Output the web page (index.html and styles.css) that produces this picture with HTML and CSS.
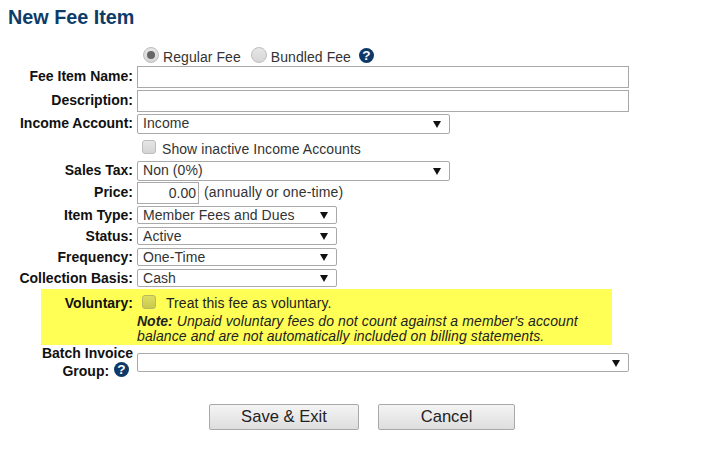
FILE: index.html
```html
<!DOCTYPE html>
<html lang="en">
<head>
<meta charset="utf-8">
<title>New Fee Item</title>
<link rel="stylesheet" href="styles.css">
</head>
<body>
<h1 class="title">New Fee Item</h1>
<form class="form">
  <div class="row row-radio">
    <span></span>
    <div class="inline">
      <input type="radio" name="kind" class="radio" checked><span class="radio-label">Regular Fee</span>
      <input type="radio" name="kind" class="radio radio-second"><span class="radio-label">Bundled Fee</span>
      <svg class="help help-top" viewBox="0 0 16 16"><circle cx="8" cy="8" r="8" fill="#0d3868"/><text x="8" y="13.2" class="help-q">?</text></svg>
    </div>
  </div>
  <div class="row row-input"><label class="label">Fee Item Name:</label><input class="field field-full"></div>
  <div class="row row-input"><label class="label">Description:</label><input class="field field-full"></div>
  <div class="row row-select"><label class="label">Income Account:</label><div class="sel sel-wide"><select><option>Income</option></select></div></div>
  <div class="row row-check">
    <span></span>
    <div class="inline"><input type="checkbox" class="check"><span class="check-label">Show inactive Income Accounts</span></div>
  </div>
  <div class="row row-select"><label class="label">Sales Tax:</label><div class="sel sel-wide"><select><option>Non (0%)</option></select></div></div>
  <div class="row row-price"><label class="label">Price:</label><div class="inline"><input class="field field-price" value="0.00"><span class="price-note">(annually or one-time)</span></div></div>
  <div class="row row-small"><label class="label">Item Type:</label><div class="sel sel-mid"><select><option>Member Fees and Dues</option></select></div></div>
  <div class="row row-small"><label class="label">Status:</label><div class="sel sel-mid"><select><option>Active</option></select></div></div>
  <div class="row row-small"><label class="label">Frequency:</label><div class="sel sel-mid"><select><option>One-Time</option></select></div></div>
  <div class="row row-small"><label class="label">Collection Basis:</label><div class="sel sel-mid"><select><option>Cash</option></select></div></div>
  <div class="voluntary">
    <label class="label label-vol">Voluntary:</label>
    <div>
      <div class="inline"><input type="checkbox" class="check check-vol"><span class="vol-text">Treat this fee as voluntary.</span></div>
      <p class="note"><b>Note:</b> Unpaid voluntary fees do not count against a member's account balance and are not automatically included on billing statements.</p>
    </div>
  </div>
  <div class="row row-batch">
    <label class="label label-batch">Batch Invoice<br>Group: <svg class="help help-batch" viewBox="0 0 16 16"><circle cx="8" cy="8" r="8" fill="#0d3868"/><text x="8" y="13.2" class="help-q">?</text></svg></label>
    <div class="sel sel-full"><select><option></option></select></div>
  </div>
  <div class="actions">
    <button type="button" class="btn btn-save">Save &amp; Exit</button>
    <button type="button" class="btn btn-cancel">Cancel</button>
  </div>
</form>
</body>
</html>
```
FILE: styles.css
```css
* { box-sizing: border-box; }
html, body { margin: 0; background: #fff; }
body { width: 706px; height: 470px; overflow: hidden; font-family: "Liberation Sans", Arial, sans-serif; font-size: 14px; letter-spacing: 0.07px; color: #222; }
.title { margin: 0; padding: 7px 0 0 8px; height: 45px; font-size: 19.8px; line-height: 21px; letter-spacing: 0; font-weight: bold; color: #0d3c68; }
.row { display: grid; grid-template-columns: 133px 1fr; column-gap: 4px; align-items: center; }
.label { font-weight: bold; text-align: right; color: #111; font-size: 14px; line-height: 16px; letter-spacing: 0; white-space: nowrap; }
.inline { display: flex; align-items: center; }
.row-radio { height: 19px; margin-bottom: 2px; }
.row-input { height: 22px; margin-bottom: 2px; }
.row-select { height: 19px; }
.row-check { height: 28px; }
.row-price { height: 22px; margin: 2px 0; }
.row-small { height: 18px; margin-bottom: 3px; }
.row-input .label, .row-select .label, .row-price .label { padding-bottom: 2px; }
.field { height: 22px; border: 1px solid #a9a9a9; border-radius: 0; padding: 1px 2px; font: 14px "Liberation Sans", Arial, sans-serif; color: #333; background: #fff; outline: 0; }
.field-full { width: 492px; }
.field-price { width: 62px; text-align: right; }
.price-note { margin-left: 5px; color: #333; position: relative; top: -1px; letter-spacing: 0.14px; }
.sel { position: relative; height: 100%; }
.sel::after { content: ""; position: absolute; top: 50%; margin-top: -3.5px; right: 9px; border-left: 4px solid transparent; border-right: 4px solid transparent; border-top: 7px solid #111; pointer-events: none; }
.sel-full::after { margin-top: -3px; }
.sel select { appearance: none; -webkit-appearance: none; width: 100%; height: 100%; display: block; border: 1px solid #a9a9a9; border-radius: 2px; background: #fff; padding: 0 0 0 5px; font: 14px "Liberation Sans", Arial, sans-serif; letter-spacing: 0.07px; color: #333; outline: 0; }
.row-select select { padding-bottom: 2px; }
.sel-wide { width: 313px; }
.sel-mid { width: 200px; }
.sel-full { width: 492px; height: 19px; margin-top: 8px; }
.radio, .check { appearance: none; -webkit-appearance: none; margin: 0; flex: none; }
.radio { width: 16px; height: 16px; border-radius: 50%; border: 1px solid #bdbdbd; background: linear-gradient(#e6e6e6, #d6d6d6); position: relative; margin-left: 6px; }
.radio:checked::after { content: ""; position: absolute; left: 3px; top: 3px; width: 8px; height: 8px; border-radius: 50%; background: #666; }
.radio-second { margin-left: 10px; }
.radio-label { margin-left: 4px; position: relative; top: 2px; color: #333; }
.help { width: 15px; height: 15px; flex: none; }
.help-q { font: bold 14.5px "Liberation Sans", Arial, sans-serif; fill: #fff; text-anchor: middle; }
.help-top { margin-left: 8px; position: relative; top: 1px; }
.check { width: 14px; height: 14px; border-radius: 3px; border: 1px solid #bdbdbd; background: linear-gradient(#e6e6e6, #d4d4d4); margin-left: 5px; }
.check-label { margin-left: 6px; position: relative; top: 2px; color: #333; }
.voluntary { display: grid; grid-template-columns: 92px 1fr; column-gap: 4px; margin: -1px 0 0 41px; width: 571px; height: 56px; background: #ffff55; padding-top: 5px; }
.label-vol { line-height: 18px; }
.check-vol { background: linear-gradient(#dede60, #c8c84e); border-color: #b8b860; margin-left: 5px; }
.vol-text { margin-left: 10px; position: relative; top: 1px; color: #222; }
.note { margin: 0; font-style: italic; font-size: 14px; line-height: 15px; letter-spacing: 0.1px; color: #222; padding-top: 4px; }
.note b { letter-spacing: 0; }
.row-batch { height: 36px; align-items: start; }
.label-batch { line-height: 18px; margin-top: -1px; }
.help-batch { vertical-align: -1px; margin-left: 1px; margin-right: 4px; }
.actions { display: flex; padding-left: 209px; column-gap: 19px; margin-top: 23px; }
.btn { height: 26px; border: 1px solid #a9a9a9; border-radius: 2px; background: linear-gradient(#f4f4f4, #dedede); font: 16.6px "Liberation Sans", Arial, sans-serif; color: #222; padding: 0; }
.btn-save { width: 150px; }
.btn-cancel { width: 137px; }
```
